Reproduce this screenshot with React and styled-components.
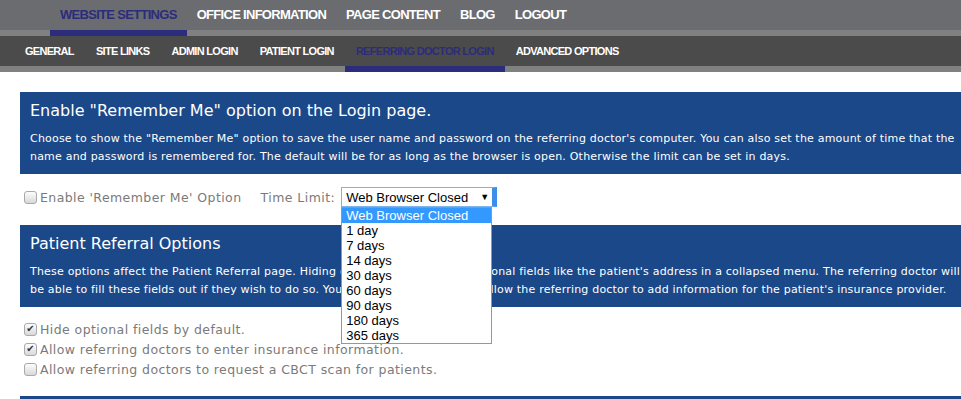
import React from "react";
import styled, { createGlobalStyle } from "styled-components";

const GlobalStyle = createGlobalStyle`
 html, body {
  margin: 0;
  padding: 0;
  background: #fff;
  overflow: hidden;
 }
`;

const topLinks = ["WEBSITE SETTINGS", "OFFICE INFORMATION", "PAGE CONTENT", "BLOG", "LOGOUT"];
const subLinks = ["GENERAL", "SITE LINKS", "ADMIN LOGIN", "PATIENT LOGIN", "REFERRING DOCTOR LOGIN", "ADVANCED OPTIONS"];
const limits = ["Web Browser Closed", "1 day", "7 days", "14 days", "30 days", "60 days", "90 days", "180 days", "365 days"];

const App = () => {
 return (
  <Page>
   <GlobalStyle />
   <TopBar>
    {topLinks.map((l, i) => (
     <TopLink key={l} $active={i === 0}>{l}</TopLink>
    ))}
   </TopBar>
   <SubBar>
    {subLinks.map((l, i) => (
     <SubLink key={l} $active={i === 4}>{l}</SubLink>
    ))}
   </SubBar>
   <Main>
    <Panel>
     <h2>Enable "Remember Me" option on the Login page.</h2>
     <p>
      Choose to show the "Remember Me" option to save the user name and password on the referring doctor's computer. You can also set the amount of time that the
      <br />
      name and password is remembered for. The default will be for as long as the browser is open. Otherwise the limit can be set in days.
     </p>
    </Panel>
    <OptionRow>
     <Check>
      <Box />
      Enable 'Remember Me' Option
     </Check>
     <LimitLabel>Time Limit:</LimitLabel>
     <Select>
      <span>Web Browser Closed</span>
      <Arrow>▼</Arrow>
      <List>
       {limits.map((d, i) => (
        <Option key={d} $selected={i === 0}>{d}</Option>
       ))}
      </List>
     </Select>
    </OptionRow>
    <Panel>
     <h2>Patient Referral Options</h2>
     <p>
      These options affect the Patient Referral page. Hiding optional fields will put optional fields like the patient's address in a collapsed menu. The referring doctor will
      <br />
      be able to fill these fields out if they wish to do so. You can also set whether to allow the referring doctor to add information for the patient's insurance provider.
     </p>
    </Panel>
    <CheckList>
     <Check>
      <Box $checked>✔</Box>
      Hide optional fields by default.
     </Check>
     <Check>
      <Box $checked>✔</Box>
      Allow referring doctors to enter insurance information.
     </Check>
     <Check>
      <Box />
      Allow referring doctors to request a CBCT scan for patients.
     </Check>
    </CheckList>
    <Panel $stub />
   </Main>
  </Page>
 );
};

const Page = styled.div`
 width: 961px;
 height: 399px;
 overflow: hidden;
`;

const TopBar = styled.nav`
 display: flex;
 padding-left: 50px;
 background: linear-gradient(#6b6c70 0 30px, #808080 30px);
 height: 36px;
`;

const TopLink = styled.a`
 box-sizing: border-box;
 height: 36px;
 padding: 0 10px;
 font: bold 13px "Liberation Sans", Arial, sans-serif;
 line-height: 29px;
 letter-spacing: -0.7px;
 border-bottom: 6px solid ${(p) => (p.$active ? "#2c2c7c" : "transparent")};
 color: ${(p) => (p.$active ? "#2c2c7c" : "#fff")};
 white-space: nowrap;
`;

const SubBar = styled.nav`
 display: flex;
 padding-left: 14px;
 background: linear-gradient(#4b4b4b 0 30px, #808080 30px);
 height: 36px;
`;

const SubLink = styled(TopLink)`
 padding: 0 11px;
 line-height: 30px;
 font-size: 11px;
 letter-spacing: -0.7px;
`;

const Main = styled.main`
 padding: 20px 0 0 20px;
 font-family: "DejaVu Sans", Verdana, sans-serif;
`;

const Panel = styled.section`
 width: 1000px;
 background: #1b4889;
 color: #fff;
 padding: 8px 10px 8px;
 box-sizing: border-box;
 ${(p) => p.$stub && "height: 20px;"}
 h2 {
  margin: 0 0 8px;
  font-size: 16px;
  font-weight: normal;
  line-height: 22px;
 }
 p {
  margin: 0;
  font-size: 11px;
  letter-spacing: 0.2px;
  line-height: 18px;
  white-space: nowrap;
 }
`;

const OptionRow = styled.div`
 display: flex;
 align-items: center;
 height: 20px;
 margin: 13px 0 18px 4px;
 color: #7a7a7a;
 font-size: 12.5px;
`;

const Check = styled.label`
 display: flex;
 align-items: center;
 gap: 3px;
 height: 20px;
 color: #7a7a7a;
 font-size: 12.5px;
 letter-spacing: 0.42px;
 white-space: nowrap;
`;

const Box = styled.span`
 box-sizing: border-box;
 width: 13px;
 height: 13px;
 border: 1px solid #a9a9a9;
 border-radius: 3px;
 background: linear-gradient(#fdfdfd, #d8d8d8);
 display: flex;
 align-items: center;
 justify-content: center;
 font-size: 10px;
 letter-spacing: 0;
 line-height: 1;
 color: #333;
`;

const LimitLabel = styled.span`
 margin-left: 19px;
 letter-spacing: 0.45px;
`;

const Select = styled.div`
 position: relative;
 box-sizing: border-box;
 display: flex;
 align-items: center;
 margin-left: 6px;
 width: 156px;
 height: 20px;
 border: 1px solid #7eb4ea;
 border-right: 5px solid #3c8ee8;
 background: #fff;
 padding-left: 4px;
 font: 13px "Liberation Sans", Arial, sans-serif;
 color: #000;
`;

const Arrow = styled.span`
 margin-left: auto;
 margin-right: 3px;
 font-size: 9px;
`;

const List = styled.ul`
 position: absolute;
 top: 19px;
 left: -1px;
 width: 151px;
 box-sizing: border-box;
 margin: 0;
 padding: 0;
 list-style: none;
 background: #fff;
 border: 1px solid #7f9db9;
 z-index: 2;
`;

const Option = styled.li`
 height: 15px;
 line-height: 15px;
 padding-left: 4px;
 background: ${(p) => (p.$selected ? "#3399ff" : "#fff")};
 color: ${(p) => (p.$selected ? "#fff" : "#000")};
`;

const CheckList = styled.div`
 display: flex;
 flex-direction: column;
 margin: 12px 0 17px 4px;
`;

export default App;
